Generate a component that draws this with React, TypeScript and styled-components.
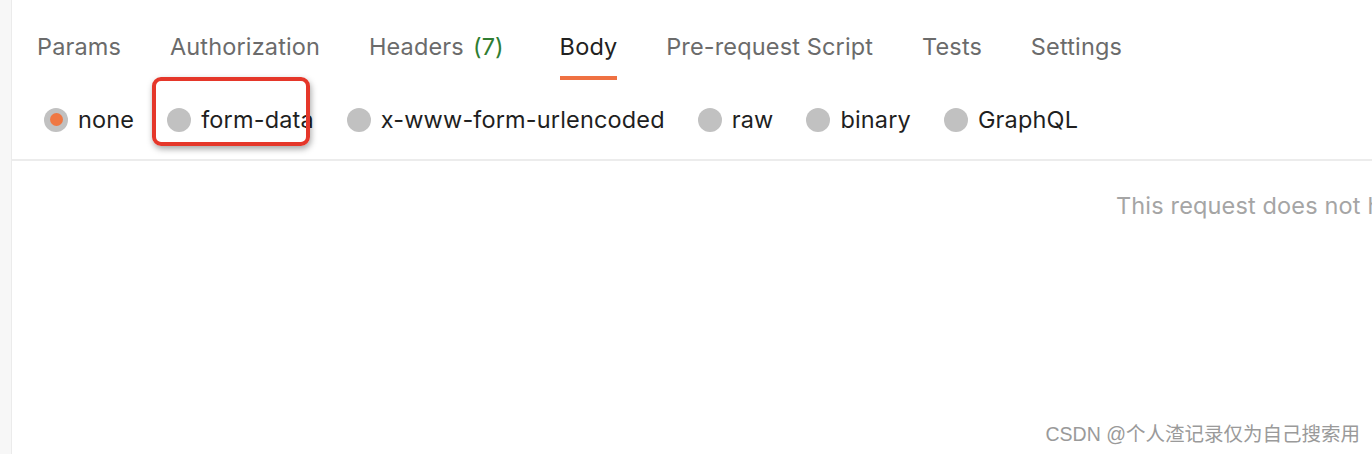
import styled, { createGlobalStyle } from "styled-components";

const GlobalStyle = createGlobalStyle`
  html, body {
    margin: 0;
    padding: 0;
    background: #ffffff;
    font-family: Inter, "Noto Sans", sans-serif;
  }
  * {
    box-sizing: border-box;
  }
`;

const tabs = [
  { label: "Params" },
  { label: "Authorization" },
  { label: "Headers", count: 7 },
  { label: "Body", active: true },
  { label: "Pre-request Script" },
  { label: "Tests" },
  { label: "Settings" },
];

const bodyTypes = [
  { label: "none", checked: true },
  { label: "form-data", marked: true },
  { label: "x-www-form-urlencoded" },
  { label: "raw" },
  { label: "binary" },
  { label: "GraphQL" },
];

export default function App() {
  return (
    <>
      <GlobalStyle />
      <StyledPage>
        <StyledSideStrip />
        <StyledMain>
          <StyledTabBar>
            {tabs.map(({ label, count, active }) => (
              <StyledTab key={label} $active={active}>
                {label}
                {count !== undefined && <StyledCount>({count})</StyledCount>}
              </StyledTab>
            ))}
          </StyledTabBar>
          <StyledRadioRow>
            {bodyTypes.map(({ label, checked, marked }) => (
              <StyledRadioItem key={label}>
                <StyledRadio $checked={checked} />
                <StyledRadioLabel>{label}</StyledRadioLabel>
                {marked && <StyledHighlight />}
              </StyledRadioItem>
            ))}
          </StyledRadioRow>
          <StyledBodyPanel>
            <StyledEmptyText>This request does not have a body</StyledEmptyText>
          </StyledBodyPanel>
          <StyledWatermark>CSDN @个人渣记录仅为自己搜索用</StyledWatermark>
        </StyledMain>
      </StyledPage>
    </>
  );
}

const StyledPage = styled.div`
  display: flex;
  width: 1372px;
  height: 454px;
  overflow: hidden;
`;
const StyledSideStrip = styled.div`
  width: 12px;
  flex-shrink: 0;
  background-color: #f7f7f7;
  border-right: 1px solid #ebebeb;
`;
const StyledMain = styled.main`
  flex-grow: 1;
  display: flex;
  flex-direction: column;
  position: relative;
  min-width: 0;
`;
const StyledTabBar = styled.nav`
  display: flex;
  gap: 48.8px;
  padding: 31px 0 0 25px;
  height: 80px;
`;
const StyledTab = styled.div<{ $active?: boolean }>`
  position: relative;
  height: 49px;
  font-size: 23.5px;
  line-height: 32px;
  letter-spacing: 0.15px;
  white-space: nowrap;
  color: ${({ $active }) => ($active ? "#212121" : "#6b6b6b")};
  ${({ $active }) =>
    $active &&
    `
    &::after {
      content: "";
      position: absolute;
      left: 0;
      right: 0;
      bottom: 0;
      height: 4px;
      background-color: #ef7142;
    }
  `}
`;
const StyledCount = styled.span`
  margin-left: 9px;
  margin-right: 7px;
  color: #2f7d32;
`;
const StyledRadioRow = styled.div`
  display: flex;
  align-items: center;
  padding: 0 0 0 32px;
  height: 81px;
  border-bottom: 2px solid #ececec;
`;
const StyledRadioItem = styled.label`
  position: relative;
  display: flex;
  align-items: center;
  gap: 10px;
  margin-right: 33px;
`;
const StyledRadio = styled.span<{ $checked?: boolean }>`
  width: 24px;
  height: 24px;
  border-radius: 50%;
  background-color: #c1c1c1;
  display: flex;
  align-items: center;
  justify-content: center;
  ${({ $checked }) =>
    $checked &&
    `
    &::after {
      content: "";
      width: 13px;
      height: 13px;
      border-radius: 50%;
      background-color: #ef7743;
    }
  `}
`;
const StyledRadioLabel = styled.span`
  font-size: 23.5px;
  line-height: 32px;
  letter-spacing: 0.15px;
  color: #1f1f1f;
  white-space: nowrap;
`;
const StyledHighlight = styled.span`
  position: absolute;
  left: -15px;
  top: -27px;
  width: 158px;
  height: 69px;
  border: 4px solid #e5372a;
  border-radius: 9px;
  box-shadow: 1px 3px 6px rgba(0, 0, 0, 0.35);
  pointer-events: none;
`;
const StyledBodyPanel = styled.section`
  display: flex;
  padding: 29px 0 0 1104px;
`;
const StyledEmptyText = styled.div`
  font-size: 23.5px;
  line-height: 32px;
  letter-spacing: 0.15px;
  color: #a5a5a5;
  white-space: nowrap;
`;
const StyledWatermark = styled.div`
  position: absolute;
  right: 12px;
  bottom: 7px;
  font-family: "Liberation Sans", "Noto Sans CJK SC", sans-serif;
  font-size: 19.5px;
  color: #9a9a9a;
  text-shadow: 0 0 2px #ffffff;
`;
